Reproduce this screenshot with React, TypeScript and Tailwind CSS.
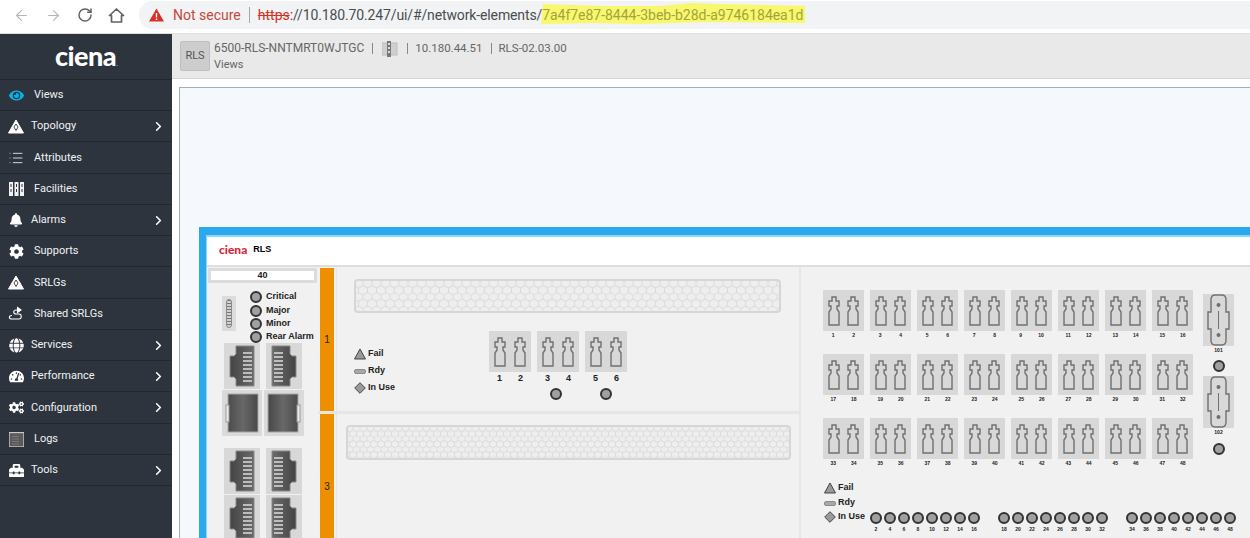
import React from "react";
import { ArrowLeft, ArrowRight, RotateCw, ChevronRight, List } from "lucide-react";
import { FaEye, FaBell, FaCog, FaGlobe, FaTachometerAlt, FaCogs, FaToolbox } from "react-icons/fa";

// ─── SIDEBAR ICONS ───
function TriangleIcon() {
  return (
    <svg width="16" height="15" viewBox="0 0 16 15">
      <path d="M8 1 L15.5 14 H0.5 Z" fill="#fff" stroke="#fff" strokeLinejoin="round" />
      <path d="M8 5 L10 8 L8 11.5 L6 8 Z" fill="none" stroke="#333" strokeWidth="0.9" />
    </svg>
  );
}

function FacilitiesIcon() {
  return (
    <svg width="15" height="14" viewBox="0 0 15 14">
      {[0, 5.5, 11].map((x) => (
        <g key={x}>
          <rect x={x} y="0" width="4" height="14" fill="#f2f2f2" />
          <rect x={x + 1.5} y="2" width="1" height="3" fill="#2e343d" />
          <rect x={x + 1.5} y="7" width="1" height="3" fill="#2e343d" />
        </g>
      ))}
    </svg>
  );
}

function SharedIcon() {
  return (
    <svg width="16" height="16" viewBox="0 0 16 16" fill="none" stroke="#fff" strokeWidth="1.1">
      <path d="M10 4 H8 C5 4 5 8 8 8 H11 C14 8 14 13 11 13 H4 C0.5 13 0.5 9.5 4 9.5" />
      <path d="M9.5 1.5 L13 4 L9.5 6.5 Z" fill="#fff" />
    </svg>
  );
}

function LogsIcon() {
  return (
    <svg width="15" height="15" viewBox="0 0 15 15">
      <rect x="0" y="0" width="15" height="15" fill="#c8c8c8" />
      <rect x="0.7" y="1.2" width="13.6" height="13.1" fill="#5a5a5a" />
      {[4, 6.5, 9, 11.5].map((y) => (
        <rect key={y} x="3" y={y} width="7" height="1" fill="#777" />
      ))}
    </svg>
  );
}

const navItems = [
  { label: "Views", icon: <FaEye size={15} className="text-[#00b5e8]" />, more: false },
  { label: "Topology", icon: <TriangleIcon />, more: true },
  { label: "Attributes", icon: <List size={16} strokeWidth={1.2} className="text-white" />, more: false },
  { label: "Facilities", icon: <FacilitiesIcon />, more: false },
  { label: "Alarms", icon: <FaBell size={14} className="text-white" />, more: true },
  { label: "Supports", icon: <FaCog size={15} className="text-white" />, more: false },
  { label: "SRLGs", icon: <TriangleIcon />, more: false },
  { label: "Shared SRLGs", icon: <SharedIcon />, more: false },
  { label: "Services", icon: <FaGlobe size={15} className="text-white" />, more: true },
  { label: "Performance", icon: <FaTachometerAlt size={15} className="text-white" />, more: true },
  { label: "Configuration", icon: <FaCogs size={15} className="text-white" />, more: true },
  { label: "Logs", icon: <LogsIcon />, more: false },
  { label: "Tools", icon: <FaToolbox size={15} className="text-white" />, more: true },
];

function Sidebar() {
  return (
    <aside className="w-[172px] shrink-0 bg-[#2e343d] text-[#eef2f5] text-[11px] font-['Roboto',sans-serif]">
      <div className="h-[45.75px] flex items-center justify-center border-b border-[#23282f] pb-[1px]">
        <span className="font-['Lato',sans-serif] font-black text-[27px] leading-none tracking-[-0.5px] text-white">
          ciena<span className="text-[6px] font-normal">.</span>
        </span>
      </div>
      {navItems.map((item) => (
        <div key={item.label} className="h-[31.25px] flex items-center border-b border-[#23282f] pl-[8px] pr-[6px] pt-[1px]">
          <span className="w-[16px] flex justify-center shrink-0">{item.icon}</span>
          <span className={item.more ? "ml-[7px] flex-1" : "ml-[10px] flex-1"}>{item.label}</span>
          {item.more && <ChevronRight size={15} strokeWidth={2.5} className="text-white" />}
        </div>
      ))}
    </aside>
  );
}

// ─── BROWSER BAR ───
function BrowserBar() {
  return (
    <div className="h-[34px] shrink-0 bg-white border-b border-[#dedede] flex items-start pt-[1px] font-['Roboto',sans-serif]">
      <div className="w-[139px] shrink-0 h-[28px] flex items-center pl-[13px] gap-[15px]">
        <ArrowLeft size={17} strokeWidth={1.6} className="text-[#b4b6b8]" />
        <ArrowRight size={17} strokeWidth={1.6} className="text-[#b4b6b8]" />
        <RotateCw size={16} strokeWidth={2.2} className="text-[#5f6368]" />
        <svg width="17" height="17" viewBox="0 0 17 17" fill="none" stroke="#5f6368" strokeWidth="1.7">
          <path d="M8.5 2 L1.5 8.5 H3.5 V15 H13.5 V8.5 H15.5 Z" strokeLinejoin="round" />
        </svg>
      </div>
      <div className="flex-1 h-[28px] rounded-l-full bg-[#f1f3f4] flex items-center pl-[10px] text-[14px] whitespace-nowrap">
        <svg width="15" height="14" viewBox="0 0 15 14" className="shrink-0">
          <path d="M7.5 0.5 L15 13.5 H0 Z" fill="#d93025" />
          <rect x="6.8" y="5" width="1.4" height="4.5" fill="#fff" />
          <rect x="6.8" y="10.5" width="1.4" height="1.5" fill="#fff" />
        </svg>
        <span className="ml-[9px] text-[#c5483c]">Not secure</span>
        <span className="mx-[8px] w-px h-[16px] bg-[#a8a8a8]" />
        <span className="text-[#d93025] line-through">https</span>
        <span className="text-[#4a4d50] tracking-[-0.13px]">://10.180.70.247/ui/#/network-elements/</span>
        <span className="relative text-[#a3a33e] tracking-[-0.025px]">
          <svg width="264" height="22" viewBox="0 0 264 22" preserveAspectRatio="none" className="absolute left-[-1px] top-[-2px]">
            <path d="M2 1 L60 3 L120 3 L150 0 L180 1 L264 3 V20 L160 19 L100 21 L50 20 L0 21 Z" fill="#f8f86e" />
          </svg>
          <span className="relative">7a4f7e87-8444-3beb-b28d-a9746184ea1d</span>
        </span>
      </div>
    </div>
  );
}

// ─── NE HEADER ───
function NeHeader() {
  return (
    <div className="h-[45px] shrink-0 bg-[#e9e9e9] border-b border-[#d6d6d6] flex items-center pl-[8px] font-['Roboto',sans-serif] text-[#666]">
      <div className="w-[30px] h-[30px] bg-[#cdcdcd] border border-[#bfbfbf] rounded-[2px] flex items-center justify-center text-[11px] text-[#555]">
        RLS
      </div>
      <div className="ml-[4px] text-[12px] leading-[15px]">
        <div className="flex items-center">
          <span>6500-RLS-NNTMRT0WJTGC</span>
          <span className="ml-[8px] w-px h-[11px] bg-[#888]" />
          <svg width="16" height="16" viewBox="0 0 16 16" className="mx-[9px]">
            <rect x="0" y="2" width="15" height="12" fill="#cfcfcf" stroke="#bdbdbd" />
            <rect x="5" y="0" width="4" height="16" fill="#777" />
            <rect x="6" y="2" width="2" height="2" fill="#ddd" />
            <rect x="6" y="6" width="2" height="2" fill="#ddd" />
            <rect x="6" y="10" width="2" height="2" fill="#ddd" />
          </svg>
          <span className="w-px h-[11px] bg-[#888]" />
          <span className="ml-[7px] text-[11.5px]">10.180.44.51</span>
          <span className="ml-[8px] w-px h-[11px] bg-[#888]" />
          <span className="ml-[7px] text-[11.5px]">RLS-02.03.00</span>
        </div>
        <div className="text-[11px]">Views</div>
      </div>
    </div>
  );
}

// ─── DEVICE PARTS ───
function Led() {
  return <div className="w-[12px] h-[12px] shrink-0 rounded-full bg-[#a0a0a0] border-2 border-[#333]" />;
}

function Grille({ id, width, height, cell }: { id: string; width: number; height: number; cell: number }) {
  const s = cell;
  const hex = `M${s / 2} 0 L${s} ${s * 0.25} L${s} ${s * 0.75} L${s / 2} ${s} L0 ${s * 0.75} L0 ${s * 0.25} Z`;
  return (
    <svg width={width} height={height} className="block">
      <defs>
        <pattern id={id} width={s} height={s * 1.5} patternUnits="userSpaceOnUse">
          <path d={hex} fill="#eeeeee" stroke="#dcdcdc" />
          <path d={hex} transform={`translate(${-s / 2} ${s * 0.75})`} fill="#eeeeee" stroke="#dcdcdc" />
          <path d={hex} transform={`translate(${s / 2} ${s * 0.75})`} fill="#eeeeee" stroke="#dcdcdc" />
        </pattern>
      </defs>
      <rect x="1" y="1" width={width - 2} height={height - 2} rx="3" fill={`url(#${id})`} stroke="#d6d6d6" strokeWidth="2" />
    </svg>
  );
}

function Sfp() {
  return (
    <svg width="12" height="30" viewBox="0 0 12 30" fill="none" stroke="#707070" strokeWidth="1.4">
      <path d="M4 1 H8 V5 H11 V10 H9 V13 L11 16 V29 H1 V16 L3 13 V10 H1 V5 H4 Z" />
    </svg>
  );
}

function PortPair({ size = "w-[41px]" }: { size?: string }) {
  return (
    <div className={`${size} h-[41px] bg-[#d8d8d8] flex items-center justify-around px-[1px]`}>
      <Sfp />
      <Sfp />
    </div>
  );
}

function Rj45({ flip }: { flip?: boolean }) {
  return (
    <div className="w-[36px] h-[46px] bg-[#d8d8d8]">
      <svg width="36" height="46" viewBox="0 0 36 46" className={flip ? "-scale-x-100" : ""}>
        <defs>
          <linearGradient id="rjFill" x1="0" x2="1" y1="0" y2="0">
            <stop offset="0" stopColor="#444" />
            <stop offset="1" stopColor="#6a6a6a" />
          </linearGradient>
        </defs>
        <path d="M12 3 H30 V43 H12 V36 L10 34 H6 V13 H10 L12 11 Z" fill="url(#rjFill)" stroke="#888" />
        {[0, 1, 2, 3, 4, 5, 6, 7].map((i) => (
          <rect key={i} x="19" y={9 + i * 4} width="9" height="2" fill="#bdbdbd" />
        ))}
      </svg>
    </div>
  );
}

function BigPort({ flip }: { flip?: boolean }) {
  return (
    <div className="w-[40px] h-[46px] bg-[#dadada]">
      <svg width="40" height="46" viewBox="0 0 40 46" className={flip ? "-scale-x-100" : ""}>
        <defs>
          <linearGradient id="bigFill" x1="0" x2="1" y1="0" y2="0">
            <stop offset="0" stopColor="#4c4c4c" />
            <stop offset="0.5" stopColor="#686868" />
            <stop offset="1" stopColor="#484848" />
          </linearGradient>
        </defs>
        <rect x="6" y="4" width="30" height="38" fill="url(#bigFill)" stroke="#a8a8a8" />
        <rect x="4" y="15" width="3" height="17" fill="#eee" stroke="#999" />
      </svg>
    </div>
  );
}

function Triangle() {
  return (
    <svg width="12" height="12" viewBox="0 0 12 12">
      <path d="M6 1 L11.5 11 H0.5 Z" fill="#9a9a9a" stroke="#444" />
    </svg>
  );
}

function Pill() {
  return <div className="w-[12px] h-[5px] mt-[1px] rounded-[2px] bg-[#a8a8a8] border border-[#8c8c8c]" />;
}

function Diamond() {
  return (
    <svg width="12" height="12" viewBox="0 0 12 12">
      <path d="M6 0.7 L11.3 6 L6 11.3 L0.7 6 Z" fill="#9a9a9a" stroke="#444" />
    </svg>
  );
}

function Legend({ gap }: { gap: string }) {
  return (
    <div className={`flex flex-col ${gap} w-[46px]`}>
      <div className="flex items-center gap-[2px] h-[12px]">
        <Triangle />
        <span>Fail</span>
      </div>
      <div className="flex items-center gap-[2px] h-[12px]">
        <Pill />
        <span>Rdy</span>
      </div>
      <div className="flex items-center gap-[2px] h-[12px]">
        <Diamond />
        <span className="whitespace-nowrap">In Use</span>
      </div>
    </div>
  );
}

function ScPort() {
  return (
    <div className="w-[31px] h-[52px] bg-[#d8d8d8]">
      <svg width="31" height="52" viewBox="0 0 31 52" fill="none" stroke="#707070" strokeWidth="1.4">
        <path d="M12 1 H19 Q23 1 23 6 V18 H26 V35 H23 V46 Q23 51 19 51 H12 Q8 51 8 46 V35 H5 V18 H8 V6 Q8 1 12 1 Z" />
        <circle cx="15.5" cy="11" r="2" fill="#707070" stroke="none" />
        <circle cx="15.5" cy="41" r="2" fill="#707070" stroke="none" />
        <path d="M15.5 17 V35" strokeWidth="1" />
      </svg>
    </div>
  );
}

// ─── FACEPLATE SECTIONS ───
function LeftColumn() {
  return (
    <div className="w-[111px] shrink-0 bg-[#f1f1f1] pt-[1px] pl-[1px]">
      <div className="w-[109px] h-[15px] bg-white border-[3px] border-[#dcdcdc] flex items-center justify-center text-[9px]">
        40
      </div>
      <div className="flex pl-[14px] mt-[7px]">
        <div className="w-[14px] h-[35px] mt-[6px] bg-[#dcdcdc] flex justify-center py-[3px]">
          <div className="w-[6px] h-full rounded-full border border-[#8a8a8a] bg-[repeating-linear-gradient(#777_0,#777_1px,#d0d0d0_1px,#d0d0d0_3px)]" />
        </div>
        <div className="ml-[14px] flex flex-col">
          {["Critical", "Major", "Minor", "Rear Alarm"].map((label, i) => (
            <div key={label} className={i === 1 ? "flex items-center h-[13px] mt-[1px] gap-[4px] whitespace-nowrap" : "flex items-center h-[13px] gap-[4px] whitespace-nowrap"}>
              <Led />
              <span>{label}</span>
            </div>
          ))}
        </div>
      </div>
      <div className="flex pl-[16px] gap-[6px]">
        <Rj45 />
        <Rj45 flip />
      </div>
      <div className="flex pl-[14px] gap-[2px] mt-[1px]">
        <BigPort />
        <BigPort flip />
      </div>
      <div className="flex pl-[16px] gap-[6px] mt-[12px]">
        <Rj45 />
        <Rj45 flip />
      </div>
      <div className="flex pl-[16px] gap-[6px] mt-[1px]">
        <Rj45 />
        <Rj45 flip />
      </div>
    </div>
  );
}

function MiddleColumn() {
  return (
    <div className="w-[481px] shrink-0 flex flex-col">
      <div className="h-[147px] shrink-0 flex pt-[1px] border-b-[3px] border-[#e6e6e6]">
        <div className="w-[14px] h-[143px] ml-[2px] bg-[#ee8f00] flex items-center justify-center text-[10px] font-normal shrink-0">1</div>
        <div className="flex-1 ml-[2px] pl-[17px] pt-[11px] border-l border-[#e6e6e6]">
          <Grille id="fan1" width={427} height={34} cell={9} />
          <div className="flex mt-[18px]">
            <div className="pt-[17px] w-[135px]">
              <Legend gap="gap-[5px]" />
            </div>
            <div>
              <div className="flex gap-[6px]">
                {[[1, 2], [3, 4], [5, 6]].map(([a, b]) => (
                  <div key={a}>
                    <PortPair size="w-[42px]" />
                    <div className="flex justify-around mt-[1px] text-[9px] leading-[11px]">
                      <span>{a}</span>
                      <span>{b}</span>
                    </div>
                  </div>
                ))}
              </div>
              <div className="flex pl-[61px] gap-[38px] mt-[4px]">
                <Led />
                <Led />
              </div>
            </div>
          </div>
        </div>
      </div>
      <div className="flex-1 flex">
        <div className="w-[14px] ml-[2px] h-[144px] bg-[#ee8f00] flex items-center justify-center text-[10px] font-normal shrink-0">3</div>
        <div className="flex-1 ml-[2px] pl-[9px] pt-[11px] border-l border-[#e6e6e6]">
          <Grille id="fan2" width={445} height={35} cell={7} />
        </div>
      </div>
    </div>
  );
}

const portRows = [0, 1, 2];
const portGroups = [0, 1, 2, 3, 4, 5, 6, 7];
const ledGroups = [
  [2, 4, 6, 8, 10, 12, 14, 16],
  [18, 20, 22, 24, 26, 28, 30, 32],
  [34, 36, 38, 40, 42, 44, 46, 48],
];

function RightColumn() {
  return (
    <div className="flex-1 min-w-0 bg-[#f1f1f1] border-l-2 border-[#e6e6e6] pl-[22px] pt-[23px]">
      <div className="flex">
        <div className="w-[376px] shrink-0">
          {portRows.map((row) => (
            <div key={row} className="flex gap-[6px] h-[64px]">
              {portGroups.map((g) => {
                const a = row * 16 + g * 2 + 1;
                return (
                  <div key={g} className="w-[41px] shrink-0">
                    <PortPair />
                    <div className="flex justify-around mt-[1px] text-[5px] leading-[6px]">
                      <span>{a}</span>
                      <span>{a + 1}</span>
                    </div>
                  </div>
                );
              })}
            </div>
          ))}
        </div>
        <div className="ml-[4px] pt-[4px] w-[31px] shrink-0 flex flex-col items-center text-[5px] leading-[6px]">
          <ScPort />
          <div className="mt-[1px]">101</div>
          <div className="mt-[7px]"><Led /></div>
          <div className="mt-[4px]"><ScPort /></div>
          <div className="mt-[1px]">102</div>
          <div className="mt-[8px]"><Led /></div>
        </div>
      </div>
      <div className="flex items-start">
        <div className="ml-[1px]">
          <Legend gap="gap-[2.5px]" />
        </div>
        <div className="flex mt-[30px]">
          {ledGroups.map((group, i) => (
            <div key={i} className={i === 0 ? "flex gap-[2px]" : "flex gap-[2px] ml-[18px]"}>
              {group.map((n) => (
                <div key={n} className="flex flex-col items-center text-[5px] leading-[6px]">
                  <Led />
                  <span className="mt-[2px]">{n}</span>
                </div>
              ))}
            </div>
          ))}
        </div>
      </div>
    </div>
  );
}

function Device() {
  return (
    <div className="ml-[19px] mt-[139px] w-[1100px] border-t-[8px] border-l-[7px] border-[#2aa9ee] font-['Liberation_Sans',sans-serif] font-bold text-[9px] text-[#222]">
      <div className="border-t-2 border-l border-[#8fd4fa]">
        <div className="h-[28px] bg-white flex items-center pl-[12px] gap-[6px] pb-[3px]">
          <span className="font-['Lato',sans-serif] font-black text-[12px] text-[#d3283b] leading-none">ciena</span>
          <span className="text-[9px] text-black">RLS</span>
        </div>
        <div className="flex h-[300px] bg-[#f1f1f1] border-t-2 border-[#dedede] overflow-hidden">
          <LeftColumn />
          <MiddleColumn />
          <RightColumn />
        </div>
      </div>
    </div>
  );
}

export default function App() {
  return (
    <div className="w-[1250px] h-[538px] overflow-hidden flex flex-col bg-white">
      <BrowserBar />
      <div className="flex-1 min-h-0 flex">
        <Sidebar />
        <main className="flex-1 min-w-0 flex flex-col">
          <NeHeader />
          <div className="flex-1 min-h-0 pt-[8px] pl-[7px] overflow-hidden">
            <div className="h-full border-t border-l border-[#9fb0bd] bg-[#f5f8fd] overflow-hidden">
              <Device />
            </div>
          </div>
        </main>
      </div>
    </div>
  );
}
